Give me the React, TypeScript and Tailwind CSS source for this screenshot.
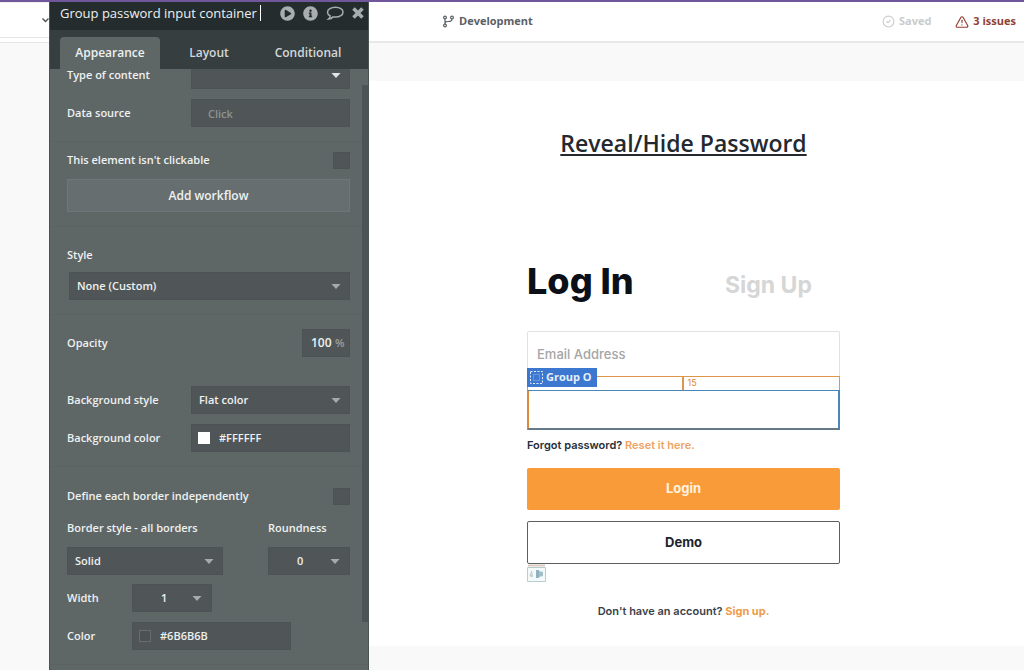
import type { ReactNode } from 'react';
import { FaInfoCircle, FaPlayCircle } from 'react-icons/fa';
import { CircleCheck, TriangleAlert } from 'lucide-react';

const field = 'h-7 bg-[#505657] border border-[#4d5354]';

function Caret({ className = 'right-[9px] text-[#a5abab]' }: { className?: string }) {
  return (
    <svg
      width="10"
      height="5"
      viewBox="0 0 10 5"
      fill="currentColor"
      className={`pointer-events-none absolute top-3 ${className}`}
    >
      <path d="M0.5 0h9L5 5z" />
    </svg>
  );
}

type SelectProps = {
  id: string;
  value: string;
  width: string;
  align?: string;
  caret?: string;
};

function Select({ id, value, width, align = 'pl-[7px]', caret }: SelectProps) {
  return (
    <div className={`relative ${width}`}>
      <select id={id} defaultValue={value} className={`w-full appearance-none text-[11px] ${field} ${align}`}>
        <option value={value}>{value}</option>
      </select>
      <Caret className={caret} />
    </div>
  );
}

type RowProps = {
  id: string;
  label: string;
  labelWidth?: string;
  children: ReactNode;
};

function Row({ id, label, labelWidth = 'w-[124px]', children }: RowProps) {
  return (
    <div className="flex items-center">
      <label htmlFor={id} className={`shrink-0 leading-3 ${labelWidth}`}>
        {label}
      </label>
      {children}
    </div>
  );
}

function CheckRow({ id, label }: { id: string; label: string }) {
  return (
    <div className="flex items-center justify-between">
      <label htmlFor={id}>{label}</label>
      <input id={id} type="checkbox" className="size-[17px] appearance-none border border-[#4d5354] bg-[#505657]" />
    </div>
  );
}

function ColorField({ id, value, swatch }: { id: string; value: string; swatch: string }) {
  return (
    <div className={`flex w-[159px] items-center gap-[9px] pl-[6px] ${field}`}>
      <span className={`size-3 shrink-0 border ${swatch}`} />
      <input id={id} defaultValue={value} className="w-full bg-transparent text-[11px] outline-none" />
    </div>
  );
}

function PropertyEditor() {
  return (
    <aside className="flex w-80 shrink-0 flex-col border-x border-[#4b5354] bg-[#5f6766] font-['Open_Sans',sans-serif] text-[11px] font-semibold text-[#eef1f1]">
      <header className="flex h-7 items-center justify-between bg-[#242c2d] pr-1 pb-[6px] pl-[10px]">
        <h2 className="border-r border-white pr-[3px] text-[13px] leading-4 font-medium">
          Group password input container
        </h2>
        <div className="flex items-center gap-2 text-[#a8adad]">
          <button aria-label="Preview">
            <FaPlayCircle size={15} />
          </button>
          <button aria-label="Info">
            <FaInfoCircle size={15} />
          </button>
          <button aria-label="Comments">
            <svg width="18" height="16" viewBox="0 0 18 16" fill="none" stroke="currentColor" strokeWidth="1.5">
              <path d="M9.5 2.300c4.300 0 7.500 2.100 7.500 4.900s-3.200 4.900-7.500 4.900c-.8 0-1.600-.1-2.300-.2-1.300 1.200-2.900 2-4.700 2.200.9-.9 1.500-1.900 1.700-3.100C2.500 10.100 1.500 8.700 1.500 7.200c0-2.800 3.700-4.900 8-4.900z" />
            </svg>
          </button>
          <button aria-label="Close">
            <svg width="12" height="12" viewBox="0 0 12 12" stroke="currentColor" strokeWidth="3.600">
              <path d="M1.500 1.500l9 9M10.500 1.500l-9 9" />
            </svg>
          </button>
        </div>
      </header>

      <nav className="flex h-[39px] items-end bg-[#373e40] pl-[10px] text-xs">
        <button className="h-8 w-[100px] rounded-t bg-[#5f6766]">Appearance</button>
        <button className="h-8 w-[98px] text-[#d3d7d7]">Layout</button>
        <button className="h-8 w-[100px] text-[#d3d7d7]">Conditional</button>
      </nav>

      <div className="relative flex-1 overflow-hidden">
        <section className="-mt-2 flex flex-col gap-[10px] pr-[18px] pb-[14px] pl-[17px]">
          <Row id="type" label="Type of content">
            <Select id="type" value="" width="w-[159px]" caret="right-[9px] text-[#e4e6e6]" />
          </Row>
          <Row id="source" label="Data source">
            <input
              id="source"
              placeholder="Click"
              className={`w-[159px] pl-4 text-[11px] placeholder:text-[#8d9393] ${field}`}
            />
          </Row>
        </section>

        <section className="border-t border-[#5b6362] pt-[10px] pr-[18px] pb-[14px] pl-[17px]">
          <CheckRow id="clickable" label="This element isn't clickable" />
          <button className="mt-[10px] h-[33px] w-full border border-[#70777a] bg-[#676e6f] text-xs">
            Add workflow
          </button>
        </section>

        <section className="border-t border-[#5b6362] pt-[19px] pr-[18px] pb-[14px] pl-[17px]">
          <label htmlFor="style" className="block leading-[18px]">
            Style
          </label>
          <div className="mt-2 pl-[2px]">
            <Select id="style" value="None (Custom)" width="w-full" />
          </div>
        </section>

        <section className="border-t border-[#5b6362] pt-[14px] pr-[18px] pb-[14px] pl-[17px]">
          <div className="flex items-center justify-between">
            <label htmlFor="opacity">Opacity</label>
            <div className={`flex w-12 items-center gap-[3px] pl-2 ${field}`}>
              <input id="opacity" defaultValue="100" className="w-[21px] bg-transparent text-xs outline-none" />
              <span className="text-[#9ba1a1]">%</span>
            </div>
          </div>
          <div className="mt-[29px] flex flex-col gap-[10px]">
            <Row id="bg-style" label="Background style">
              <Select id="bg-style" value="Flat color" width="w-[159px]" />
            </Row>
            <Row id="bg-color" label="Background color">
              <ColorField id="bg-color" value="#FFFFFF" swatch="border-white bg-white" />
            </Row>
          </div>
        </section>

        <section className="border-t border-[#5b6362] pt-[21px] pr-[18px] pb-[14px] pl-[17px]">
          <CheckRow id="borders" label="Define each border independently" />
          <div className="mt-[14px] flex justify-between">
            <div>
              <label htmlFor="border-style" className="mb-[10px] block leading-[18px]">
                Border style - all borders
              </label>
              <Select id="border-style" value="Solid" width="w-[156px]" />
            </div>
            <div>
              <label htmlFor="roundness" className="mb-[10px] block leading-[18px]">
                Roundness
              </label>
              <Select id="roundness" value="0" width="w-[82px]" align="pl-7" caret="right-[10px] text-[#a5abab]" />
            </div>
          </div>
          <div className="mt-[9px] flex flex-col gap-[10px]">
            <Row id="width" label="Width" labelWidth="w-[65px]">
              <Select id="width" value="1" width="w-20" align="pl-7" caret="right-[10px] text-[#a5abab]" />
            </Row>
            <Row id="color" label="Color" labelWidth="w-[65px]">
              <ColorField id="color" value="#6B6B6B" swatch="border-[#6b6b6b] bg-[#4c5253]" />
            </Row>
          </div>
        </section>
        <div className="border-t border-[#5b6362]" />

        {/* scrollbar thumb */}
        <div className="absolute top-4 right-0 bottom-12 w-[6px] bg-[#4c5456]" />
      </div>
    </aside>
  );
}

function TopBar() {
  return (
    <header className="flex h-[41px] items-center border-b-2 border-[#e8e8e8] bg-white pr-2 pl-[73px] font-['Open_Sans',sans-serif] text-[11px] font-bold">
      <a href="#branch" className="flex items-center gap-1 text-[#5b6066]">
        <svg width="13" height="13" viewBox="0 0 13 13" fill="none" stroke="currentColor" strokeWidth="1.200">
          <path d="M3 4v5M3 8.500c0-1.800 1.200-2 3.500-2S10 6 10 4" />
          <circle cx="3" cy="2.500" r="1.400" />
          <circle cx="3" cy="10.500" r="1.400" />
          <circle cx="10" cy="2.500" r="1.400" />
        </svg>
        Development
      </a>
      <span className="ml-auto flex items-center gap-1 text-[#c9cbcd]">
        <CircleCheck size={13} strokeWidth={2} />
        Saved
      </span>
      <a href="#issues" className="ml-6 flex items-center gap-1 text-[#8f3f33]">
        <TriangleAlert size={14} strokeWidth={2} />3 issues
      </a>
    </header>
  );
}

function LoginForm() {
  return (
    <form className="flex w-[313px] flex-col">
      <div className="flex items-end">
        <h1 className="w-[198px] text-4xl font-extrabold text-[#0b0f17]">Log In</h1>
        <a href="#signup" className="text-[23px] leading-8 font-bold text-[#d6d6d6]">
          Sign Up
        </a>
      </div>

      <input
        type="email"
        aria-label="Email Address"
        placeholder="Email Address"
        className="mt-[30px] h-[45px] rounded-t-xs border border-b-0 border-[#dfe3e6] px-[9px] text-[13px] font-medium placeholder:text-[#a5a5a5]"
      />

      {/* selected group, with the margin guide over it */}
      <div className="relative">
        <div className="flex h-[14px] border border-b-0 border-[#e0964a]">
          <div className="w-1/2 border-r-2 border-[#e0964a]" />
          <span className="pl-1 text-[9px] leading-3 text-[#e0872d]">15</span>
        </div>
        <div className="h-10 border-2 border-t border-[#4a86b8] border-b-[#66798a] border-l-[#d98a3a]" />
        <div className="absolute -top-2 left-0 flex h-[19px] w-[70px] items-center gap-[3px] bg-[#3c78d0] pl-[3px] font-['Open_Sans',sans-serif] text-[11px] font-bold text-[#e6effb]">
          <svg width="13" height="13" viewBox="0 0 13 13" fill="none" stroke="currentColor" strokeDasharray="2 1.500">
            <path d="M0.500 0.500h12v12h-12z" />
            <path d="M3.500 3.500h6v6h-6z" strokeOpacity="0.500" strokeDasharray="1 1" />
          </svg>
          Group O
        </div>
      </div>

      <p className="mt-[6px] text-[11px] leading-[18px] font-semibold text-[#27303a]">
        Forgot password?{' '}
        <a href="#reset" className="text-[#efa362]">
          Reset it here.
        </a>
      </p>
      <button
        type="button"
        className="mt-[14px] h-[42px] rounded-xs bg-[#f99b38] text-[13px] font-bold text-[#fff3e0]"
      >
        Login
      </button>
      <button
        type="button"
        className="mt-[11px] h-[43px] rounded-xs border border-[#5c5f62] text-[13px] font-bold text-[#1d242c]"
      >
        Demo
      </button>

      <svg width="19" height="18" viewBox="0 0 19 18" className="block">
        <path d="M1 1.500h17" stroke="#dccbbd" strokeWidth="2" />
        <path d="M0.500 3.500h18v14h-18z" fill="#f4f9f9" stroke="#b9cdcf" />
        <path d="M5 7l-2 5h3M5 9v4" fill="none" stroke="#b9c4c8" />
        <path d="M9 6h3v8H9z" fill="#8fb2be" />
        <path d="M12 7l4 1v4l-4 1z" fill="#a3c0c9" />
      </svg>

      <p className="mt-5 text-center text-[11px] leading-[18px] font-semibold text-[#3a3f4a]">
        Don't have an account?{' '}
        <a href="#signup" className="font-bold text-[#ee9c4a]">
          Sign up.
        </a>
      </p>
    </form>
  );
}

function App() {
  return (
    <div className="flex min-h-screen flex-col border-t-2 border-[#70569a] bg-[#f9f9f9]">
      <div className="flex flex-1">
        <div className="w-[49px] shrink-0">
          <div className="flex h-9 items-center justify-end border-y border-t-[#f0f0f0] border-b-[#e6e6e6] bg-white">
            <svg width="7" height="5" viewBox="0 0 7 5" fill="none" stroke="#4b5157" strokeWidth="1.300">
              <path d="M0.500 0.500l3 3 3-3" />
            </svg>
          </div>
          <div className="h-[5px] border-b border-[#e6e6e6] bg-white" />
        </div>
        <PropertyEditor />
        <div className="flex min-w-0 flex-1 flex-col">
          <TopBar />
          <main className="mt-[38px] mb-6 flex flex-1 flex-col items-center bg-white pr-[26px] font-[Inter,sans-serif]">
            <h1 className="mt-[44px] mb-[100px] font-['Open_Sans',sans-serif] text-[23px] leading-9 font-semibold text-[#23292f] underline decoration-2 underline-offset-2">
              Reveal/Hide Password
            </h1>
            <LoginForm />
          </main>
        </div>
      </div>
    </div>
  );
}

export default App;
